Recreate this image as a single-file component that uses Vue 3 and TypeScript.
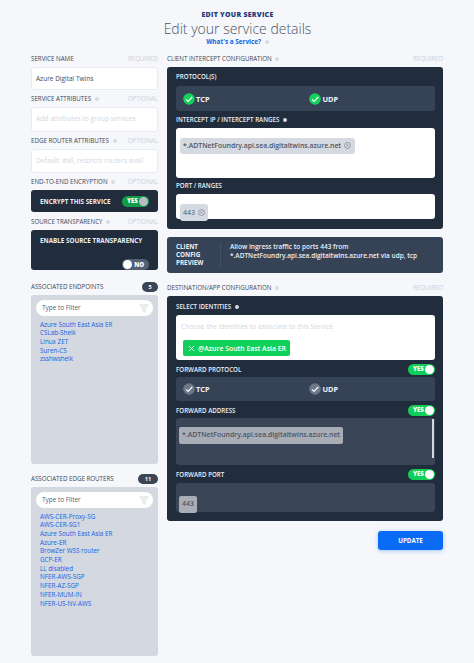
<script setup lang="ts">
const endpoints: string[] = ['Azure South East Asia ER', 'CSLab-Sheik', 'Linux ZET', 'Suren-CS', 'zsshwsheik']
const routers: string[] = ['AWS-CER-Proxy-SG', 'AWS-CER-SG1', 'Azure South East Asia ER', 'Azure-ER', 'BrowZer WSS router', 'GCP-ER', 'LL disabled', 'NFER-AWS-SGP', 'NFER-AZ-SGP', 'NFER-MUM-IN', 'NFER-US-NV-AWS']
</script>

<template>
  <div class="page">
    <header class="head">
      <div class="eyebrow">EDIT YOUR SERVICE</div>
      <h1>Edit your service details</h1>
      <div class="what">What's a Service? <i class="dot pale"></i></div>
    </header>
    <div class="cols">
      <div class="left">
        <div class="lab h-first"><span>SERVICE NAME</span><em>REQUIRED</em></div>
        <div class="input name">Azure Digital Twins</div>
        <div class="lab"><span>SERVICE ATTRIBUTES <i class="dot pale"></i></span><em>OPTIONAL</em></div>
        <div class="input ph attrs">Add attributes to group services</div>
        <div class="lab"><span>EDGE ROUTER ATTRIBUTES <i class="dot pale"></i></span><em>OPTIONAL</em></div>
        <div class="input ph routers">Default: #all, restricts routers avail</div>
        <div class="lab"><span>END-TO-END ENCRYPTION <i class="dot pale"></i></span><em>OPTIONAL</em></div>
        <div class="dark encrypt">
          <span>ENCRYPT THIS SERVICE</span>
          <div class="toggle on dim"><b>YES</b><u></u></div>
        </div>
        <div class="lab"><span>SOURCE TRANSPARENCY <i class="dot pale"></i></span><em>OPTIONAL</em></div>
        <div class="dark transparency">
          <span>ENABLE SOURCE TRANSPARENCY</span>
          <div class="toggle off"><u></u><b>NO</b></div>
        </div>

        <div class="lab assoc"><span>ASSOCIATED ENDPOINTS</span><b class="count">5</b></div>
        <div class="list">
          <div class="filter">Type to Filter
            <svg viewBox="0 0 12 11" width="10" height="9"><path d="M1 1h10L7.4 6v4L4.6 8.6V6z" fill="#eef0f4" stroke="#d5d9e0" stroke-width=".8"/></svg>
          </div>
          <a v-for="e in endpoints" :key="e">{{ e }}</a>
        </div>
        <div class="lab assoc second"><span>ASSOCIATED EDGE ROUTERS</span><b class="count wide">11</b></div>
        <div class="list">
          <div class="filter">Type to Filter
            <svg viewBox="0 0 12 11" width="10" height="9"><path d="M1 1h10L7.4 6v4L4.6 8.6V6z" fill="#eef0f4" stroke="#d5d9e0" stroke-width=".8"/></svg>
          </div>
          <a v-for="r in routers" :key="r">{{ r }}</a>
        </div>
      </div>

      <div class="right">
        <div class="lab h-first"><span>CLIENT INTERCEPT CONFIGURATION <i class="dot pale"></i></span><em>REQUIRED</em></div>
        <section class="panel client">
          <div class="sub top">PROTOCOL(S)</div>
          <div class="proto">
            <div class="opt"><svg class="chk" viewBox="0 0 12 12"><circle cx="6" cy="6" r="5.8" fill="#14d15c"/><path d="M3 6.4l2.1 2L9.3 3.8" fill="none" stroke="#fff" stroke-width="1.2"/></svg>TCP</div>
            <div class="opt"><svg class="chk" viewBox="0 0 12 12"><circle cx="6" cy="6" r="5.8" fill="#14d15c"/><path d="M3 6.4l2.1 2L9.3 3.8" fill="none" stroke="#fff" stroke-width="1.2"/></svg>UDP</div>
          </div>
          <div class="sub ip">INTERCEPT IP / INTERCEPT RANGES <i class="dot light"></i></div>
          <div class="white ranges">
            <div class="chip">*.ADTNetFoundry.api.sea.digitaltwins.azure.net
              <svg viewBox="0 0 8 8" width="7" height="7"><circle cx="4" cy="4" r="3.4" fill="none" stroke="#5a6374" stroke-width=".6"/><path d="M2.8 2.8l2.4 2.4M5.2 2.8L2.8 5.2" stroke="#5a6374" stroke-width=".6"/></svg>
            </div>
          </div>
          <div class="sub port">PORT / RANGES</div>
          <div class="white ports">
            <div class="chip small">443
              <svg viewBox="0 0 8 8" width="7" height="7"><circle cx="4" cy="4" r="3.4" fill="none" stroke="#5a6374" stroke-width=".6"/><path d="M2.8 2.8l2.4 2.4M5.2 2.8L2.8 5.2" stroke="#5a6374" stroke-width=".6"/></svg>
            </div>
          </div>
        </section>

        <section class="preview">
          <div class="ptitle">CLIENT<br>CONFIG<br>PREVIEW</div>
          <div class="ptext">Allow Ingress traffic to ports 443 from<br>*.ADTNetFoundry.api.sea.digitaltwins.azure.net via udp, tcp</div>
        </section>

        <div class="lab dest"><span>DESTINATION/APP CONFIGURATION <i class="dot pale"></i></span><em>REQUIRED</em></div>
        <section class="panel destp">
          <div class="sub top">SELECT IDENTITIES <i class="dot light"></i></div>
          <div class="white ident">
            <div class="iph">Choose the identities to associate to this Service</div>
            <div class="gchip">
              <svg viewBox="0 0 8 8" width="7" height="7"><path d="M1 1l6 6M7 1L1 7" stroke="#fff" stroke-width="1"/></svg>
              @Azure South East Asia ER
            </div>
          </div>
          <div class="sub row">FORWARD PROTOCOL<div class="toggle on"><b>YES</b><u></u></div></div>
          <div class="proto p2">
            <div class="opt"><svg class="chk" viewBox="0 0 12 12"><circle cx="6" cy="6" r="5.8" fill="#6d7889"/><path d="M3 6.4l2.1 2L9.3 3.8" fill="none" stroke="#fff" stroke-width="1.2"/></svg>TCP</div>
            <div class="opt"><svg class="chk" viewBox="0 0 12 12"><circle cx="6" cy="6" r="5.8" fill="#6d7889"/><path d="M3 6.4l2.1 2L9.3 3.8" fill="none" stroke="#fff" stroke-width="1.2"/></svg>UDP</div>
          </div>
          <div class="sub row">FORWARD ADDRESS<div class="toggle on"><b>YES</b><u></u></div></div>
          <div class="box addr">
            <div class="gray">*.ADTNetFoundry.api.sea.digitaltwins.azure.net</div>
            <i class="scroll"></i>
          </div>
          <div class="sub row last">FORWARD PORT<div class="toggle on"><b>YES</b><u></u></div></div>
          <div class="box fport"><div class="gray tiny">443</div></div>
        </section>
        <div class="actions"><button type="button">UPDATE</button></div>
      </div>
    </div>
  </div>
</template>

<style>
html, body { margin: 0; background: #f5f7fb; }
</style>

<style scoped>
.page { width: 474px; height: 663px; box-sizing: border-box; padding: 10px 30px 0 31px; font-family: "Open Sans", "Noto Sans", sans-serif; color: #2b3648; overflow: hidden; }
.head { text-align: center; height: 44px; }
.eyebrow { font-size: 7px; line-height: 9px; font-weight: 800; color: #1d3a78; letter-spacing: .25px; }
h1 { margin: 2px 0 0; font-size: 14px; line-height: 16px; font-weight: 300; color: #4a5361; }
.what { font-size: 6.4px; line-height: 9px; font-weight: 700; color: #0f62e6; }
.cols { display: grid; grid-template-columns: 127px 276px; column-gap: 9px; }
.lab { display: flex; justify-content: space-between; align-items: center; height: 9px; margin: 4px 0; font-size: 6.2px; line-height: 9px; color: #3c4656; font-weight: 500; white-space: nowrap; }
.lab em { font-style: normal; color: #cdd2da; }
.lab.h-first { margin-top: 0; }
.lab.assoc { margin-top: 12px; }
.lab.assoc.second { margin-top: 10px; }
.dot { display: inline-block; width: 4px; height: 4px; border-radius: 50%; margin-left: 2px; }
.dot.pale { background: #d6dbe3; }
.dot.light { background: #d5dbe5; }
.input { box-sizing: border-box; height: 24px; background: #fff; border: 1px solid #e8ebf1; border-radius: 3px; padding: 0 4px; font-size: 6.7px; line-height: 22px; white-space: nowrap; overflow: hidden; }
.input.name { height: 23px; line-height: 21px; font-size: 6.5px; color: #414b5a; font-weight: 500; }
.input.ph { color: #d3d7de; }
.input.attrs { height: 25px; }
.dark { box-sizing: border-box; background: #212c3d; border-radius: 3px; color: #edf0f5; font-size: 6.3px; font-weight: 700; white-space: nowrap; }
.encrypt { height: 22px; margin-bottom: 5px; display: flex; align-items: center; justify-content: space-between; padding: 0 9px; }
.transparency { height: 40px; padding: 6px 9px 0; position: relative; }
.transparency .toggle { position: absolute; right: 9px; bottom: 0; }
.toggle { width: 27px; height: 11px; border-radius: 6px; display: flex; align-items: center; justify-content: space-between; padding: 0 1px 0 5px; box-sizing: border-box; font-size: 6px; color: #fff; background: #0fcf58; flex: none; }
.toggle b { font-weight: 800; }
.toggle u { width: 9px; height: 9px; border-radius: 50%; background: #fff; display: block; }
.toggle.dim { background: #0f9d48; }
.toggle.dim u { background: #b9bdc2; }
.toggle.off { background: #536073; padding: 0 5px 0 1px; }
.count { width: 16px; height: 10px; border-radius: 5px; background: #3a4556; color: #fff; font-size: 5.5px; line-height: 10px; text-align: center; }
.count.wide { width: 20px; }
.list { box-sizing: border-box; height: 169px; background: #d3d8e1; border-radius: 3px; padding: 5px; }
.filter { position: relative; height: 16px; background: #fff; border-radius: 8px; font-size: 6.4px; line-height: 16px; color: #566070; padding-left: 6px; margin-bottom: 4.5px; font-weight: 500; box-sizing: border-box; }
.filter svg { position: absolute; right: 4px; top: 4px; }
.list a { display: block; margin-left: 4px; font-size: 6.3px; line-height: 8.7px; color: #1463e6; font-weight: 500; white-space: nowrap; }
.panel { box-sizing: border-box; background: #212c3d; border-radius: 3px; padding: 5px 8px 0 9px; color: #edf0f5; }
.client { height: 162px; }
.sub { font-size: 6.2px; line-height: 9px; height: 9px; font-weight: 600; color: #edf0f5; white-space: nowrap; }
.sub.top { margin-bottom: 5px; }
.sub.ip { margin: 4px 0; }
.sub.port { margin: 3px 0 4px; }
.proto { height: 25px; background: #364256; border-radius: 3px; display: grid; grid-template-columns: 126.5px 1fr; padding-left: 6.5px; align-items: center; }
.opt { display: flex; align-items: center; gap: 1.5px; font-size: 7.4px; font-weight: 700; color: #f0f3f7; }
.chk { width: 12px; height: 12px; }
.white { background: #fff; border-radius: 3px; box-sizing: border-box; }
.ranges { height: 50px; padding: 3px 4px; }
.ports { height: 25px; padding: 4px; }
.chip { display: inline-flex; align-items: center; gap: 3px; height: 16px; padding: 0 4px 0 3px; background: #d5d9e1; border-radius: 3px; color: #4d5666; font-size: 6.9px; font-weight: 600; white-space: nowrap; }
.chip.small { height: 17px; padding: 0 3px; font-weight: 500; }
.preview { margin-top: 8px; height: 36px; background: #364256; border-radius: 3px; display: flex; color: #edf0f5; font-weight: 700; font-size: 6.3px; line-height: 7.8px; }
.ptitle { width: 54px; margin: 6px 0; padding-left: 9px; box-sizing: border-box; border-right: 1px solid #455166; flex: none; }
.ptext { padding: 5px 0 0 9px; font-size: 6.5px; line-height: 9px; white-space: nowrap; font-weight: 600; }
.lab.dest { margin-top: 10px; }
.destp { height: 225px; padding-top: 6px; }
.destp .sub.top { margin-bottom: 4px; }
.ident { height: 45px; padding: 7px 4px 0 5px; }
.iph { font-size: 6.8px; line-height: 9px; color: #d3d7de; }
.gchip { display: inline-flex; align-items: center; gap: 3px; margin: 9px 0 0 2px; height: 16px; width: 107px; box-sizing: border-box; padding-left: 5px; background: #0fd15a; border-radius: 2px; color: #fff; font-size: 6.9px; font-weight: 600; white-space: nowrap; }
.sub.row { display: flex; justify-content: space-between; align-items: center; height: 11px; margin: 4px 0 2px; }
.sub.row.last { margin-bottom: 3px; }
.p2 { height: 24px; }
.box { position: relative; background: #3a4557; border-radius: 3px; box-sizing: border-box; }
.addr { height: 47px; padding: 2px 3px; }
.fport { height: 29px; padding: 6px 3px; }
.gray { display: inline-block; height: 17px; line-height: 16px; padding: 0 3px; background: #a9adb5; border-radius: 2px; color: #4c5565; font-size: 6.9px; font-weight: 600; white-space: nowrap; }
.gray.tiny { box-sizing: border-box; width: 18px; text-align: center; padding: 0; }
.scroll { position: absolute; right: 1px; top: 1px; width: 2px; height: 39px; background: #d3d7de; }
.actions { display: flex; justify-content: flex-end; margin-top: 10px; }
button { width: 65px; height: 19px; border: 0; padding: 0; border-radius: 3px; background: #0a6cf5; color: #fff; font: 700 6.2px "Open Sans", sans-serif; box-shadow: 0 1px 4px rgba(10, 108, 245, .35); }
</style>
